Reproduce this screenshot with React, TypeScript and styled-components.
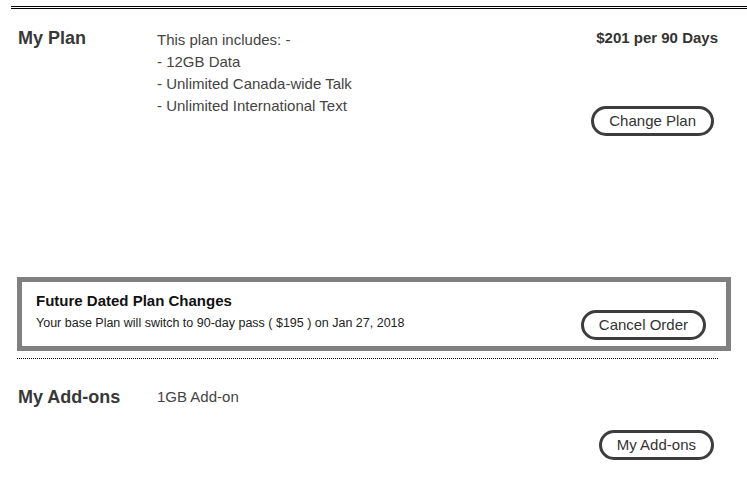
import styled, { createGlobalStyle } from "styled-components";

const GlobalStyle = createGlobalStyle`
  body {
    margin: 0;
    background: #fff;
    font-family: "Liberation Sans", Arial, sans-serif;
  }
  * { box-sizing: border-box; }
`;

const planItems = [
  "This plan includes: -",
  "- 12GB Data",
  "- Unlimited Canada-wide Talk",
  "- Unlimited International Text",
];

const App = () => {
  return (
    <>
      <GlobalStyle />
      <TopRule />
      <Page>
        <PlanSection>
          <SectionLabel>My Plan</SectionLabel>
          <PlanDetails>
            {planItems.map((item) => (
              <DetailLine key={item}>{item}</DetailLine>
            ))}
          </PlanDetails>
          <PlanAside>
            <Price>$201 per 90 Days</Price>
            <PillButton $offset={57}>Change Plan</PillButton>
          </PlanAside>
        </PlanSection>

        <NoticeBox>
          <NoticeText>
            <NoticeTitle>Future Dated Plan Changes</NoticeTitle>
            <NoticeBody>
              Your base Plan will switch to 90-day pass ( $195 ) on Jan 27, 2018
            </NoticeBody>
          </NoticeText>
          <PillButton>Cancel Order</PillButton>
        </NoticeBox>

        <DottedRule />

        <AddonSection>
          <AddonRow>
            <SectionLabel>My Add-ons</SectionLabel>
            <DetailLine>1GB Add-on</DetailLine>
          </AddonRow>
          <ButtonRow>
            <PillButton>My Add-ons</PillButton>
          </ButtonRow>
        </AddonSection>
      </Page>
    </>
  );
};

export default App;

const TopRule = styled("div")`
  height: 0;
  margin: 6px 0 0 11px;
  border-top: 3px double #000;
`;

const Page = styled("div")`
  padding: 0 29px 0 17px;
`;

const PlanSection = styled("section")`
  display: grid;
  grid-template-columns: 140px 1fr auto;
  align-items: start;
  min-height: 268px;
  padding-top: 18px;
`;

const SectionLabel = styled("h2")`
  margin: 0;
  padding-left: 1px;
  font-size: 18px;
  line-height: 22px;
  font-weight: bold;
  color: #383838;
`;

const PlanDetails = styled("div")`
  display: flex;
  flex-direction: column;
  margin-top: 2px;
`;

const DetailLine = styled("div")`
  font-size: 15px;
  line-height: 22px;
  color: #444;
`;

const PlanAside = styled("div")`
  display: flex;
  flex-direction: column;
  align-items: flex-end;
`;

const Price = styled("div")`
  font-size: 15px;
  line-height: 22px;
  font-weight: bold;
  color: #333;
`;

const PillButton = styled("button")<{ $offset?: number }>`
  margin: ${({ $offset }) => ($offset ? `${$offset}px` : "0")} 4px 0 0;
  padding: 3px 15px;
  height: 30px;
  border: 3px solid #3d3d3d;
  border-radius: 16px;
  background: #fff;
  font-family: "Liberation Sans", Arial, sans-serif;
  font-size: 15px;
  line-height: 18px;
  color: #333;
  cursor: pointer;
  white-space: nowrap;
`;

const NoticeBox = styled("div")`
  display: flex;
  justify-content: space-between;
  align-items: flex-end;
  height: 74px;
  margin-right: -13px;
  padding: 0 16px 6px 14px;
  border: 5px solid #808080;
  background: #fff;
`;

const NoticeText = styled("div")`
  align-self: flex-start;
  margin-top: 10px;
`;

const NoticeTitle = styled("div")`
  font-size: 15px;
  line-height: 18px;
  font-weight: bold;
  color: #111;
`;

const NoticeBody = styled("div")`
  margin-top: 4px;
  font-size: 12.5px;
  line-height: 18px;
  color: #222;
`;

const DottedRule = styled("div")`
  margin-top: 7px;
  border-top: 1px dotted #000;
`;

const AddonSection = styled("section")`
  padding-top: 27px;
`;

const AddonRow = styled("div")`
  display: grid;
  grid-template-columns: 140px 1fr;
`;

const ButtonRow = styled("div")`
  display: flex;
  justify-content: flex-end;
  margin-top: 22px;
`;
